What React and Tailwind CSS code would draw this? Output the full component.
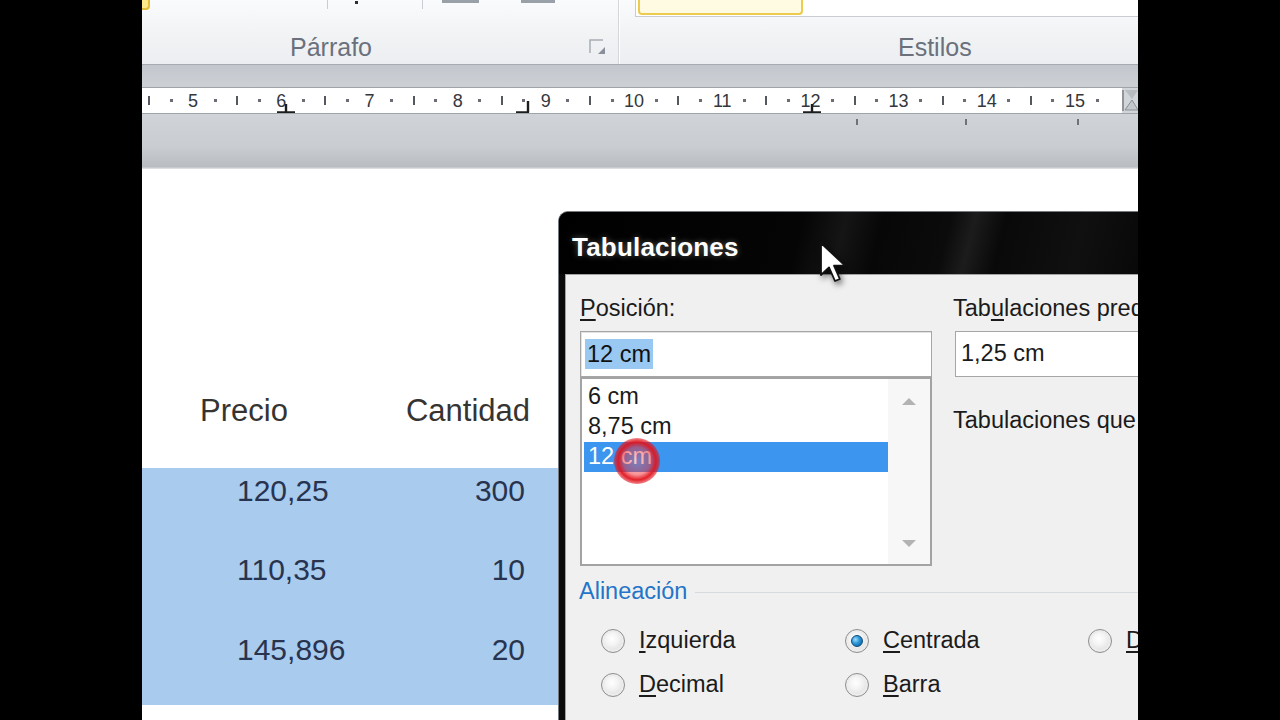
import React from "react";

// ruler marks every quarter centimetre, starting at 4.5 cm
const rulerMarks = [];
for (let k = 0; k < 44; k++) {
  const v = 4.5 + k * 0.25;
  if (Number.isInteger(v)) rulerMarks.push({ type: "num", label: String(v) });
  else if (v % 1 === 0.5) rulerMarks.push({ type: "tick" });
  else rulerMarks.push({ type: "dot" });
}

const rows = [
  { precio: "120,25", cantidad: "300" },
  { precio: "110,35", cantidad: "10" },
  { precio: "145,896", cantidad: "20" },
];

const Radio = ({ checked, ul, rest }) => (
  <div className="flex items-center gap-[14px] h-[30px]">
    <span className="w-[24px] h-[24px] shrink-0 rounded-full border border-[#8c8e90] bg-[radial-gradient(circle_at_45%_40%,#ffffff_0%,#f3f3f3_35%,#d2d2d2_100%)] shadow-[inset_0_0_0_2px_#ececec] flex items-center justify-center">
      {checked && (
        <span className="w-[12px] h-[12px] rounded-full border border-[#0d4a7a] bg-[radial-gradient(circle_at_35%_35%,#9bdcff_0%,#2a93d4_45%,#0b5590_100%)]" />
      )}
    </span>
    <span className="leading-none whitespace-nowrap">
      <u className="underline-offset-[3px]">{ul}</u>
      {rest}
    </span>
  </div>
);

const Ribbon = () => (
  <div className="h-[65px] flex border-b border-[#a7acb3] bg-[linear-gradient(to_bottom,#fafbfc_0%,#f1f2f4_60%,#eceef1_100%)] font-['Liberation_Sans',Arial,sans-serif]">
    <div className="w-[476px] shrink-0 flex flex-col">
      <div className="h-[16px] flex items-start">
        <div className="w-[8px] h-[10px] rounded-br-[4px] border-r-2 border-b-2 border-[#e5bd3c] bg-[#fde98c]" />
        <div className="ml-[177px] w-px h-[9px] bg-[#c9cdd3]" />
        <div className="ml-[27px] mt-[1px] w-[3px] h-[3px] bg-[#2a2f3a]" />
        <div className="ml-[64px] w-px h-[9px] bg-[#c9cdd3]" />
        <div className="ml-[19px] w-[37px] h-[3px] bg-[#9aa0a8]" />
        <div className="ml-[42px] w-[34px] h-[3px] bg-[#9aa0a8]" />
      </div>
      <div className="flex-1 pt-[14px] flex items-center">
        <span className="ml-[148px] text-[25px] leading-none text-[#6a717c]">Párrafo</span>
        <svg className="ml-auto mr-[12px]" width="17" height="16" viewBox="0 0 17 16">
          <path d="M1 14V1h13" fill="none" stroke="#a8adb4" strokeWidth="1.5" />
          <path d="M16 15H9l7-7z" fill="#8a9099" />
        </svg>
      </div>
    </div>
    <div className="w-[2px] shrink-0 border-l border-[#d3d6db] bg-white" />
    <div className="flex-1 flex flex-col">
      <div className="h-[17px] ml-[15px] bg-white border-l border-b border-[#c8ccd2] flex">
        <div className="ml-[2px] w-[165px] h-[15px] rounded-b-[4px] border-2 border-t-0 border-[#eccb4f] bg-[#fffbe3]" />
      </div>
      <div className="flex-1 pt-[13px] flex items-center">
        <span className="ml-[278px] text-[25px] leading-none text-[#6a717c]">Estilos</span>
      </div>
    </div>
  </div>
);

const Ruler = () => (
  <div className="h-[27px] flex font-['Liberation_Sans',Arial,sans-serif]">
    <div className="w-[980px] shrink-0 relative overflow-hidden bg-white border-y border-[#9fa4ab] flex items-center">
      <div className="flex items-center -ml-[4px]">
        {rulerMarks.map((m, i) => (
          <div key={i} className="w-[22.05px] shrink-0 flex items-center justify-center">
            {m.type === "num" && (
              <span className="text-[18px] leading-none text-[#34373c]">{m.label}</span>
            )}
            {m.type === "tick" && <span className="w-[2px] h-[9px] bg-[#55595f]" />}
            {m.type === "dot" && <span className="w-[3px] h-[3px] bg-[#6a6e74]" />}
          </div>
        ))}
      </div>
      {/* tab stop markers */}
      <svg className="absolute left-[134px] top-[16px]" width="20" height="10" viewBox="0 0 20 10">
        <path d="M10 0v8M1 8.5h18" stroke="#1d1d1d" strokeWidth="2.4" />
      </svg>
      <svg className="absolute left-[374px] top-[13px]" width="14" height="13" viewBox="0 0 14 13">
        <path d="M12 0v11.5M0 11.5h13" stroke="#1d1d1d" strokeWidth="2.4" />
      </svg>
      <svg className="absolute left-[660px] top-[16px]" width="20" height="10" viewBox="0 0 20 10">
        <path d="M10 0v8M1 8.5h18" stroke="#1d1d1d" strokeWidth="2.4" />
      </svg>
    </div>
    <div className="flex-1 bg-[#d2d5da] border-y border-[#9fa4ab] flex items-center">
      <svg width="16" height="25" viewBox="0 0 16 25">
        <path d="M1 2v21" stroke="#7b7f85" strokeWidth="1.5" />
        <path d="M3 22L10 12L16 22Z" fill="#c3c6ca" stroke="#8b8f95" />
        <path d="M3 2L10 11L16 2Z" fill="#b8bbc0" />
      </svg>
    </div>
  </div>
);

const App = () => {
  return (
    <div className="w-[1280px] h-[720px] bg-black flex overflow-hidden">
      <div className="w-[142px] shrink-0" />
      <div className="w-[996px] h-[720px] shrink-0 relative overflow-hidden flex flex-col bg-white">
        <Ribbon />
        <div className="h-[22px] bg-[linear-gradient(to_bottom,#c3c7cd,#cdd0d5)]" />
        <Ruler />
        <div className="h-[55px] relative bg-[linear-gradient(to_bottom,#d0d3d7_0%,#c9ccd0_60%,#b9bcc1_96%,#e6e7e9_100%)]">
          <span className="absolute left-[714px] top-[5px] w-[2px] h-[6px] bg-[#6f7378]" />
          <span className="absolute left-[823px] top-[5px] w-[2px] h-[6px] bg-[#6f7378]" />
          <span className="absolute left-[935px] top-[5px] w-[2px] h-[6px] bg-[#6f7378]" />
        </div>

        {/* document page */}
        <div className="flex-1 bg-white pt-[222px] font-['Liberation_Sans',Arial,sans-serif]">
          <div className="w-[388px] h-[40px] pl-[58px] flex items-center justify-between text-[31px] text-[#363432]">
            <span>Precio</span>
            <span>Cantidad</span>
          </div>
          <div className="mt-[37px] w-[440px] h-[237px] bg-[#a9cbee] flex flex-col gap-[35.5px] text-[30px] text-[#28344f]">
            {rows.map((r, i) => (
              <div key={i} className="w-[383px] h-[44px] pl-[95px] flex items-center justify-between">
                <span>{r.precio}</span>
                <span>{r.cantidad}</span>
              </div>
            ))}
          </div>
        </div>

        {/* Tabulaciones dialog */}
        <div className="absolute left-[416px] top-[211px] w-[600px] h-[520px] rounded-tl-[10px] border-l border-t border-[#777a7e] bg-[#0b0b0b] overflow-hidden flex flex-col font-['Liberation_Sans',Arial,sans-serif]">
          <div className="h-[62px] shrink-0 pt-[8px] pl-[13px] flex items-center bg-[linear-gradient(104deg,#000000_0%,#050505_40%,#151515_47%,#070707_53%,#0b0b0b_64%,#1c1c1c_68%,#090909_73%,#101010_86%,#060606_100%)]">
            <span className="text-[26px] font-bold text-white tracking-[0.2px] [text-shadow:0_0_6px_rgba(255,255,255,0.35)]">
              Tabulaciones
            </span>
          </div>
          <div className="flex-1 ml-[6px] bg-[#f0f0f0] border-t border-l border-[#a3a3a3] pl-[13px] text-[23.5px] text-[#1b1b1b]">
            <div className="flex">
              <div className="w-[353px] shrink-0 pl-[1px]">
                <div className="mt-[20px] h-[28px] flex items-center">
                  <span>
                    <u className="underline-offset-[3px]">P</u>osición:
                  </span>
                </div>
                <div className="mt-[8px] h-[46px] bg-white border border-[#a6a6a6] shadow-[inset_1px_1px_0_#e2e2e2] flex items-center pl-[4px]">
                  <span className="bg-[#99c8f2] text-[#111] px-[2px] leading-[30px]">12 cm</span>
                </div>
                <div className="h-[189px] bg-white border-2 border-[#a3a3a3] flex">
                  <div className="flex-1 pt-[3px] pl-[2px]">
                    <div className="h-[30px] flex items-center pl-[4px]">6 cm</div>
                    <div className="h-[30px] flex items-center pl-[4px]">8,75 cm</div>
                    <div className="h-[30px] flex items-center pl-[4px] bg-[#3c95ee] text-white">12 cm</div>
                  </div>
                  <div className="w-[42px] shrink-0 bg-[#f7f7f7] flex flex-col items-center justify-between pt-[18px] pb-[16px]">
                    <svg width="16" height="9" viewBox="0 0 16 9">
                      <path d="M8 1L15 8H1Z" fill="#b3b3b3" />
                    </svg>
                    <svg width="16" height="9" viewBox="0 0 16 9">
                      <path d="M8 8L15 1H1Z" fill="#b3b3b3" />
                    </svg>
                  </div>
                </div>
              </div>
              <div className="ml-[21px] flex-1">
                <div className="mt-[20px] h-[28px] flex items-center whitespace-nowrap">
                  <span>
                    Tab<u className="underline-offset-[3px]">u</u>laciones predeterminadas:
                  </span>
                </div>
                <div className="mt-[8px] ml-[2px] h-[46px] bg-white border border-[#a6a6a6] flex items-center pl-[5px]">
                  1,25 cm
                </div>
                <div className="mt-[30px] h-[28px] flex items-center whitespace-nowrap">
                  Tabulaciones que se borrarán:
                </div>
              </div>
            </div>

            <div className="mt-[12px] h-[28px] flex items-center">
              <span className="text-[#2474c9]">Alineación</span>
              <div className="ml-[8px] flex-1 h-px bg-[#d6dbe0]" />
            </div>
            <div className="mt-[20px] pl-[22px] grid grid-cols-[244px_243px_243px] gap-y-[14px]">
              <Radio ul="I" rest="zquierda" />
              <Radio checked ul="C" rest="entrada" />
              <Radio ul="D" rest="erecha" />
              <Radio ul="D" rest="ecimal" />
              <Radio ul="B" rest="arra" />
            </div>
          </div>
        </div>

        {/* click highlight */}
        <div className="absolute left-[472px] top-[438px] w-[46px] h-[46px] rounded-full bg-[radial-gradient(circle,rgba(255,90,90,0.3)_0%,rgba(240,40,45,0.5)_42%,rgba(225,20,30,0.95)_58%,rgba(225,20,30,0.4)_74%,rgba(225,20,30,0)_100%)]" />

        {/* mouse cursor */}
        <svg className="absolute left-[677px] top-[241px] drop-shadow-[2px_3px_3px_rgba(0,0,0,0.6)]" width="28" height="44" viewBox="0 0 14 22">
          <path d="M1 1V17L5 13.2L8 20L10.4 19L7.5 12.3H13Z" fill="#ffffff" stroke="#111111" strokeWidth="0.9" strokeLinejoin="round" />
        </svg>
      </div>
      <div className="flex-1" />
    </div>
  );
};

export default App;
